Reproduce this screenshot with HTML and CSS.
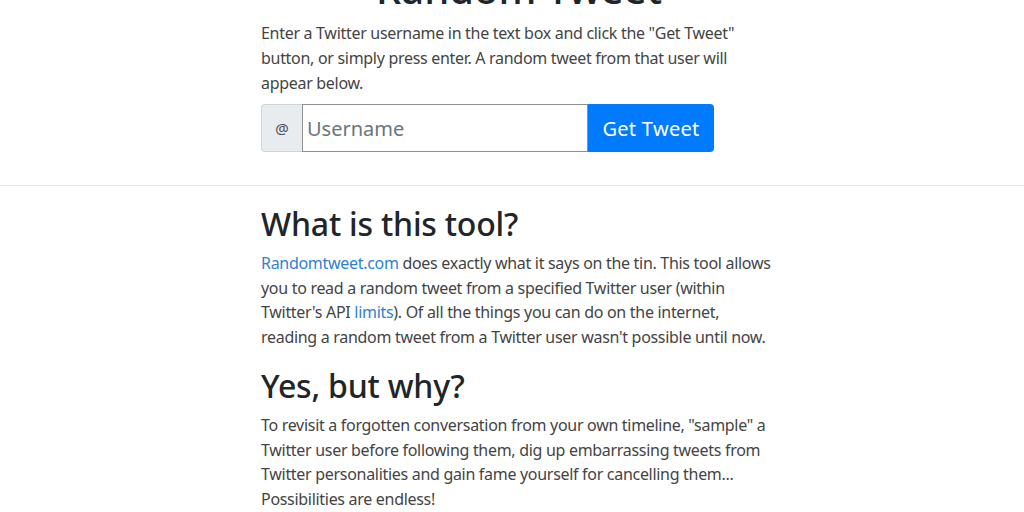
FILE: index.html
```html
<!DOCTYPE html>
<html>
<head>
<meta charset="utf-8">
<title>Random Tweet</title>
<link rel="stylesheet" href="styles.css">
</head>
<body>
<header class="top">
  <div class="container">
    <h1 class="title">Random Tweet</h1>
    <p class="intro">Enter a Twitter username in the text box and click the "Get Tweet" button, or simply press enter. A random tweet from that user will appear below.</p>
    <form class="input-group">
      <span class="prepend">@</span>
      <input class="field" type="text" placeholder="Username">
      <button class="btn" type="button">Get Tweet</button>
    </form>
  </div>
</header>
<main class="content">
  <div class="container">
    <h2 class="heading">What is this tool?</h2>
    <p class="text"><a href="#" class="link">Randomtweet.com</a> does exactly what it says on the tin. This tool allows you to read a random tweet from a specified Twitter user (within Twitter's API <a href="#" class="link">limits</a>). Of all the things you can do on the internet, reading a random tweet from a Twitter user wasn't possible until now.</p>
    <h2 class="heading">Yes, but why?</h2>
    <p class="text">To revisit a forgotten conversation from your own timeline, "sample" a Twitter user before following them, dig up embarrassing tweets from Twitter personalities and gain fame yourself for cancelling them... Possibilities are endless!</p>
  </div>
</main>
</body>
</html>
```
FILE: styles.css
```css
html, body {
  margin: 0;
  padding: 0;
  background: #fff;
}
body {
  font-family: "Noto Sans", "Open Sans", sans-serif;
  font-size: 16px;
  color: #444;
  overflow: hidden;
}
.container {
  width: 516px;
  margin: 0 auto;
  padding-left: 14px;
}
.top {
  border-bottom: 1px solid #e6e6e6;
  padding-bottom: 33px;
}
.title {
  margin: -35px 0 0 0;
  font-size: 40px;
  line-height: 48px;
  font-weight: 500;
  color: #212529;
  text-align: center;
}
.intro {
  margin: 8px 0 8px 0;
  line-height: 25px;
  letter-spacing: -0.3px;
}
.input-group {
  display: flex;
  height: 48px;
  margin: 0;
}
.prepend {
  display: flex;
  align-items: center;
  justify-content: center;
  width: 40px;
  background: #e9ecef;
  border: 1px solid #ced4da;
  border-right: none;
  border-radius: 4px 0 0 4px;
  font-size: 15px;
  color: #495057;
}
.field {
  width: 286px;
  box-sizing: border-box;
  border: 1px solid #8f8f8f;
  padding: 0 4px;
  font-family: inherit;
  font-size: 20px;
  color: #495057;
  outline: none;
}
.field::placeholder {
  color: #6c757d;
}
.btn {
  width: 126px;
  border: none;
  background: #007bff;
  color: #fff;
  font-family: inherit;
  font-size: 20px;
  letter-spacing: 0.3px;
  border-radius: 0 4px 4px 0;
  padding: 0;
}
.content {
  padding-top: 19px;
}
.heading {
  margin: 0 0 8px 0;
  font-size: 32px;
  line-height: 38px;
  font-weight: 500;
  color: #212529;
  letter-spacing: -0.2px;
}
.text {
  margin: 0 0 18px 0;
  line-height: 24.5px;
  letter-spacing: -0.3px;
}
.link {
  color: #2f7fd4;
  text-decoration: none;
}
```
